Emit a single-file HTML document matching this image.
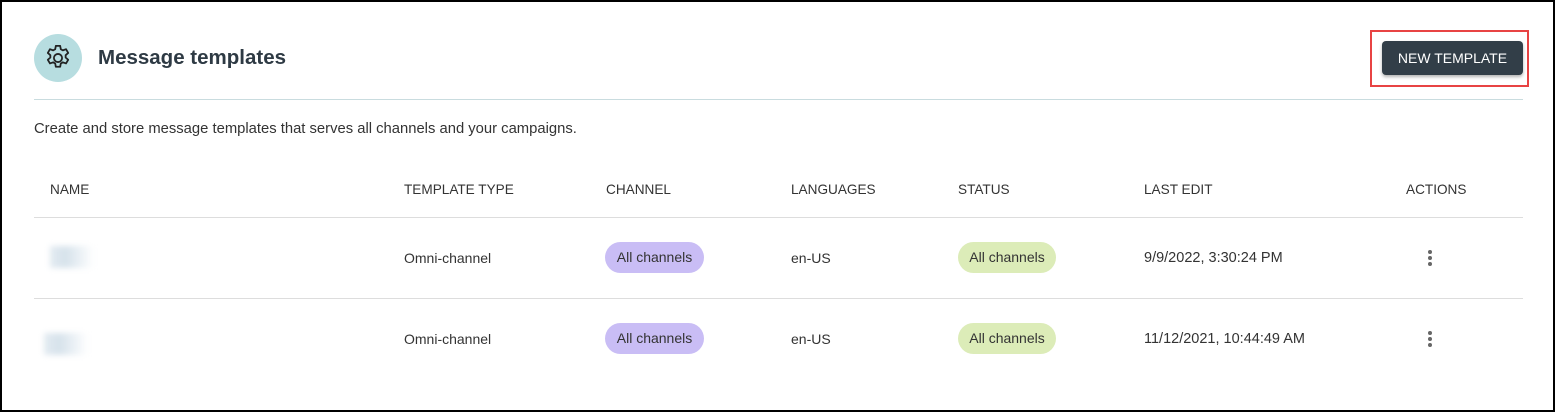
<!DOCTYPE html>
<html><head><meta charset="utf-8"><style>
*{box-sizing:border-box;margin:0;padding:0}
body{width:1557px;height:413px;background:#fff;font-family:"Liberation Sans",sans-serif;color:#333;position:relative;overflow:hidden}
.frame{position:absolute;left:0;top:0;width:1555px;height:412px;border:2px solid #000}
.a{position:absolute;white-space:nowrap}
.hdr{font-size:13.6px;color:#333;top:182px}
.cell{font-size:14px;color:#333}
.pill{position:absolute;height:31px;border-radius:16px;font-size:14px;line-height:31px;text-align:center;color:#333}
.line{position:absolute;left:34px;width:1489px;height:1px;background:#ddd}
.dots{position:absolute;width:4px}
.dots i{display:block;width:4px;height:4px;border-radius:2px;background:#666;margin-bottom:2px}
.blur{position:absolute;width:44px;height:22px;background:linear-gradient(90deg,#e3ebf1,#d6e2eb 35%,#fff);filter:blur(3px)}
</style></head><body>
<div class="frame"></div>
<div class="a" style="left:34px;top:34px;width:48px;height:48px;border-radius:50%;background:#b7dde0"></div>
<svg class="a" style="left:44px;top:44px" width="28" height="28" viewBox="1 1 22 22" fill="none" stroke="#222" stroke-width="1.4" stroke-linejoin="round"><path d="M10.3 2.5h3.4l.5 2.6 1.6.9 2.5-.9 1.7 2.9-2 1.8v1.8l2 1.8-1.7 2.9-2.5-.9-1.6.9-.5 2.6h-3.4l-.5-2.6-1.6-.9-2.5.9-1.7-2.9 2-1.8v-1.8l-2-1.8 1.7-2.9 2.5.9 1.6-.9z"/><circle cx="12" cy="12" r="3.2"/></svg>
<div class="a" style="left:98px;top:46px;font-size:20.5px;font-weight:bold;color:#2e3a44">Message templates</div>
<div class="a" style="left:1370px;top:30px;width:159px;height:57px;border:2px solid #e84343"></div>
<div class="a" style="left:1382px;top:41px;width:141px;height:34px;background:#323e48;border-radius:4px;box-shadow:0 2px 3px rgba(0,0,0,.3);color:#fff;font-size:14px;line-height:34px;text-align:center">NEW TEMPLATE</div>
<div class="line" style="top:99px;background:#c9dcdf"></div>
<div class="a" style="left:34px;top:121px;font-size:14.8px;color:#333">Create and store message templates that serves all channels and your campaigns.</div>
<div class="a hdr" style="left:50px">NAME</div>
<div class="a hdr" style="left:404px">TEMPLATE TYPE</div>
<div class="a hdr" style="left:606px">CHANNEL</div>
<div class="a hdr" style="left:791px">LANGUAGES</div>
<div class="a hdr" style="left:958px">STATUS</div>
<div class="a hdr" style="left:1144px">LAST EDIT</div>
<div class="a hdr" style="left:1406px">ACTIONS</div>
<div class="line" style="top:217px"></div>
<div class="line" style="top:298px"></div>

<div class="blur" style="left:50px;top:246px"></div>
<div class="a cell" style="left:404px;top:250px">Omni-channel</div>
<div class="pill" style="left:605px;top:242px;width:99px;background:#c9bdf5">All channels</div>
<div class="a cell" style="left:791px;top:250px">en-US</div>
<div class="pill" style="left:958px;top:242px;width:98px;background:#dcecb8">All channels</div>
<div class="a cell" style="left:1144px;top:250px;font-size:14.5px">9/9/2022, 3:30:24 PM</div>
<div class="dots" style="left:1428px;top:250px"><i></i><i></i><i></i></div>

<div class="blur" style="left:44px;top:333px"></div>
<div class="a cell" style="left:404px;top:331px">Omni-channel</div>
<div class="pill" style="left:605px;top:323px;width:99px;background:#c9bdf5">All channels</div>
<div class="a cell" style="left:791px;top:331px">en-US</div>
<div class="pill" style="left:958px;top:323px;width:98px;background:#dcecb8">All channels</div>
<div class="a cell" style="left:1144px;top:331px;font-size:14.5px">11/12/2021, 10:44:49 AM</div>
<div class="dots" style="left:1428px;top:331px"><i></i><i></i><i></i></div>
</body></html>
